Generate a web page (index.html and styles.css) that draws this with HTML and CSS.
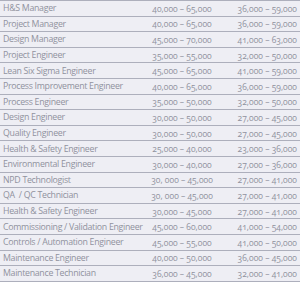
FILE: index.html
```html
<!DOCTYPE html>
<html lang="en">
<head>
    <meta charset="UTF-8">
    <title>Salary Guide</title>
    <link rel="stylesheet" href="styles.css">
</head>
<body>
    <div class="salary-table">
        <div class="row"><span class="role">H&amp;S Manager</span><span class="range">40,000 – 65,000</span><span class="range alt">36,000 – 59,000</span></div>
        <div class="row"><span class="role">Project Manager</span><span class="range">40,000 – 65,000</span><span class="range alt">36,000 – 59,000</span></div>
        <div class="row"><span class="role">Design Manager</span><span class="range">45,000 – 70,000</span><span class="range alt">41,000 – 63,000</span></div>
        <div class="row"><span class="role">Project Engineer</span><span class="range">35,000 – 55,000</span><span class="range alt">32,000 – 50,000</span></div>
        <div class="row"><span class="role">Lean Six Sigma Engineer</span><span class="range">45,000 – 65,000</span><span class="range alt">41,000 – 59,000</span></div>
        <div class="row"><span class="role">Process Improvement Engineer</span><span class="range">40,000 – 65,000</span><span class="range alt">36,000 – 59,000</span></div>
        <div class="row"><span class="role">Process Engineer</span><span class="range">35,000 – 50,000</span><span class="range alt">32,000 – 50,000</span></div>
        <div class="row"><span class="role">Design Engineer</span><span class="range">30,000 – 50,000</span><span class="range alt">27,000 – 45,000</span></div>
        <div class="row"><span class="role">Quality Engineer</span><span class="range">30,000 – 50,000</span><span class="range alt">27,000 – 45,000</span></div>
        <div class="row"><span class="role">Health &amp; Safety Engineer</span><span class="range">25,000 – 40,000</span><span class="range alt">23,000 – 36,000</span></div>
        <div class="row"><span class="role">Environmental Engineer</span><span class="range">30,000 – 40,000</span><span class="range alt">27,000 – 36,000</span></div>
        <div class="row"><span class="role">NPD Technologist</span><span class="range">30, 000 – 45,000</span><span class="range alt">27,000 – 41,000</span></div>
        <div class="row"><span class="role">QA &nbsp;/ QC Technician</span><span class="range">30, 000 – 45,000</span><span class="range alt">27,000 – 41,000</span></div>
        <div class="row"><span class="role">Health &amp; Safety Engineer</span><span class="range">30,000 – 45,000</span><span class="range alt">27,000 – 41,000</span></div>
        <div class="row"><span class="role">Commissioning / Validation Engineer</span><span class="range">45,000 – 60,000</span><span class="range alt">41,000 – 54,000</span></div>
        <div class="row"><span class="role">Controls / Automation Engineer</span><span class="range">45,000 – 55,000</span><span class="range alt">41,000 – 50,000</span></div>
        <div class="row"><span class="role">Maintenance Engineer</span><span class="range">40,000 – 50,000</span><span class="range alt">36,000 – 45,000</span></div>
        <div class="row"><span class="role">Maintenance Technician</span><span class="range">36,000 – 45,000</span><span class="range alt">32,000 – 41,000</span></div>
    </div>
</body>
</html>
```

FILE: styles.css
```css
body {
    margin: 0;
    padding: 0;
    background-color: #eeeef4;
    font-family: "Open Sans", sans-serif;
    color: #90929e;
}
.salary-table {
    display: flex;
    flex-direction: column;
    border-top: 1px solid #adafbc;
}
.row {
    display: flex;
    align-items: center;
    height: 15.6px;
    box-sizing: border-box;
    border-bottom: 1px solid #adafbc;
    white-space: nowrap;
}
.role {
    flex: 0 0 146px;
    padding-left: 3px;
    box-sizing: border-box;
    font-size: 8.8px;
    letter-spacing: -0.3px;
}
.range {
    flex: 0 0 72px;
    text-align: center;
    font-size: 8.5px;
    font-variant-numeric: oldstyle-nums;
}
.range.alt {
    flex: 1;
    text-align: right;
    padding-right: 3px;
}
```
